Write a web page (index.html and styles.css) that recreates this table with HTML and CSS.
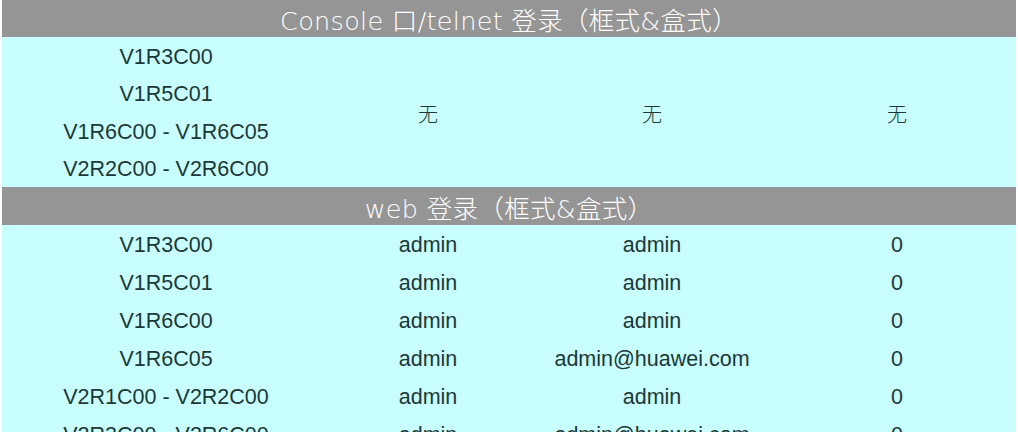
FILE: index.html
```html
<!DOCTYPE html>
<html lang="zh-CN">
  <head>
    <meta charset="UTF-8" />
    <title>缺省用户名和密码</title>
    <link rel="stylesheet" href="styles.css">
  </head>
  <body>
    <table class="pwd-table">
      <colgroup>
        <col class="col-ver" />
        <col class="col-user" />
        <col class="col-pass" />
        <col class="col-level" />
      </colgroup>
      <tr class="section first">
        <th colspan="4">Console 口/telnet 登录（框式&amp;盒式）</th>
      </tr>
      <tr class="console">
        <td>V1R3C00</td>
        <td class="none" rowspan="4">无</td>
        <td class="none" rowspan="4">无</td>
        <td class="none" rowspan="4">无</td>
      </tr>
      <tr class="console"><td>V1R5C01</td></tr>
      <tr class="console"><td>V1R6C00 - V1R6C05</td></tr>
      <tr class="console"><td>V2R2C00 - V2R6C00</td></tr>
      <tr class="section">
        <th colspan="4">web 登录（框式&amp;盒式）</th>
      </tr>
      <tr><td>V1R3C00</td><td>admin</td><td>admin</td><td>0</td></tr>
      <tr><td>V1R5C01</td><td>admin</td><td>admin</td><td>0</td></tr>
      <tr><td>V1R6C00</td><td>admin</td><td>admin</td><td>0</td></tr>
      <tr><td>V1R6C05</td><td>admin</td><td>admin@huawei.com</td><td>0</td></tr>
      <tr><td>V2R1C00 - V2R2C00</td><td>admin</td><td>admin</td><td>0</td></tr>
      <tr><td>V2R3C00 - V2R6C00</td><td>admin</td><td>admin@huawei.com</td><td>0</td></tr>
    </table>
  </body>
</html>
```
FILE: styles.css
```css
:root {
  --row-height: 38px;
  --cell-bg-color: #c8fefe;
  --section-bg-color: #959595;
  --text-color: #1c3838;
}

html,
body {
  margin: 0;
  background-color: #ffffff;
}

body {
  padding-left: 2px;
}

.pwd-table {
  width: 1014px;
  border-collapse: collapse;
  table-layout: fixed;
  font-family: "Liberation Sans", Arial, "Noto Sans CJK SC", sans-serif;
  font-size: 21.5px;
  color: var(--text-color);
  background-color: var(--cell-bg-color);
}

.col-ver {
  width: 328px;
}
.col-user {
  width: 196px;
}
.col-pass {
  width: 252px;
}
.col-level {
  width: 238px;
}

.pwd-table tr {
  height: var(--row-height);
}
.pwd-table tr.first {
  height: 37px;
}
.pwd-table tr.console {
  height: 37.5px;
}

.pwd-table td,
.pwd-table th {
  padding: 0;
  text-align: center;
  vertical-align: middle;
  white-space: nowrap;
}

.pwd-table td {
  padding-top: 3px;
}

.section th {
  background-color: var(--section-bg-color);
  color: #ffffff;
  font-family: "DejaVu Sans", "Noto Sans CJK SC", sans-serif;
  font-weight: 300;
  font-size: 25.5px;
  letter-spacing: 0.3px;
}

.none {
  font-family: "Noto Sans CJK SC", sans-serif;
  font-weight: 300;
  font-size: 20px;
}
```
